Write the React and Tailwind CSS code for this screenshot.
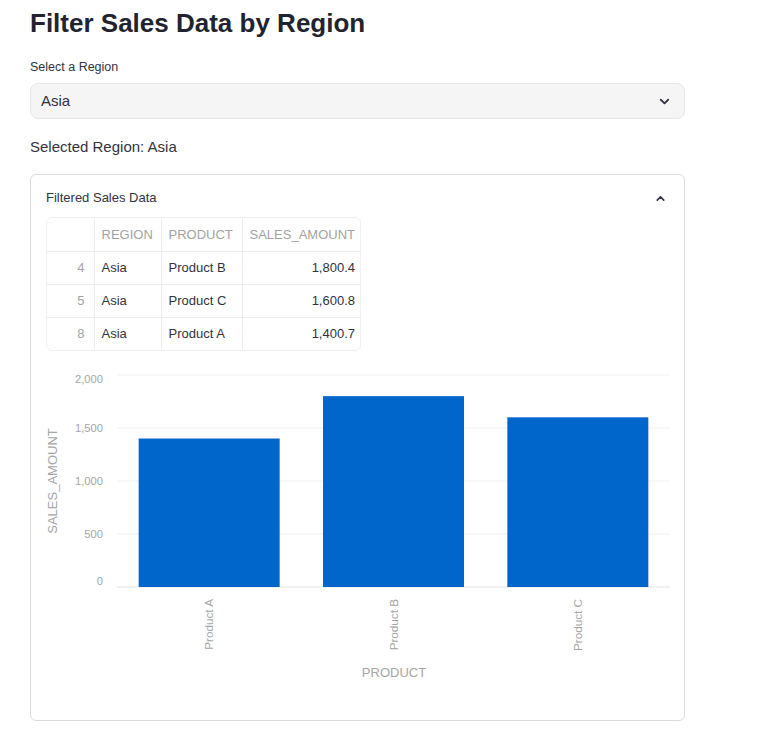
import React, { useState } from 'react';
import { ChevronDown, ChevronUp } from 'lucide-react';

const rows = [
  { idx: 4, region: 'Asia', product: 'Product B', amount: 1800.4 },
  { idx: 5, region: 'Asia', product: 'Product C', amount: 1600.8 },
  { idx: 8, region: 'Asia', product: 'Product A', amount: 1400.7 },
];

const fmt = (n) => n.toLocaleString('en-US', { minimumFractionDigits: 1, maximumFractionDigits: 1 });

const SalesChart = () => {
  // plot area inside the svg
  const left = 71;
  const right = 624;
  const top = 15;
  const bottom = 227;
  const max = 2000;
  const y = (v) => bottom - (v / max) * (bottom - top);
  const band = (right - left) / 3;
  const barW = 141;
  const bars = [...rows].sort((a, b) => a.product.localeCompare(b.product));
  const ticks = [0, 500, 1000, 1500, 2000];
  // end labels are pushed inward so they stay inside the plot
  const labelShift = (t) => (t === max ? 8 : t === 0 ? -2 : 4);

  return (
    <svg width="624" height="330" className="block" style={{ fontFamily: '"Liberation Sans", Arial, sans-serif' }}>
      {ticks.map((t) => (
        <g key={t}>
          <line x1={left} x2={right} y1={y(t)} y2={y(t)} stroke={t === 0 ? '#e4e4e4' : '#f0f0f0'} strokeWidth="1" />
          <text x="57" y={y(t) + labelShift(t)} textAnchor="end" fontSize="11.2" fill="#a5a5a5">
            {t.toLocaleString('en-US')}
          </text>
        </g>
      ))}
      {bars.map((b, i) => {
        const cx = left + band * i + band / 2;
        return (
          <g key={b.product}>
            <rect x={cx - barW / 2} y={y(b.amount)} width={barW} height={bottom - y(b.amount)} fill="#0066cc" />
            <text
              transform={`translate(${cx + 4}, ${bottom + 12}) rotate(-90)`}
              textAnchor="end"
              fontSize="11.7"
              fill="#a5a5a5"
            >
              {b.product}
            </text>
          </g>
        );
      })}
      <text transform="translate(11, 121) rotate(-90)" textAnchor="middle" fontSize="13" fill="#a5a5a5">
        SALES_AMOUNT
      </text>
      <text x="348" y="317" textAnchor="middle" fontSize="13" fill="#a5a5a5">
        PRODUCT
      </text>
    </svg>
  );
};

const App = () => {
  const [region, setRegion] = useState('Asia');
  const [open, setOpen] = useState(true);

  return (
    <div className="min-h-screen bg-white pt-2 pl-[30px] text-[#262730]" style={{ fontFamily: '"Liberation Sans", Arial, sans-serif' }}>
      <div className="w-[655px]">
        <h1 className="text-[26px] leading-[31px] font-bold text-[#1f2430]">Filter Sales Data by Region</h1>

        <label className="block mt-[20px] text-[12.5px] leading-4 text-[#31333f]">Select a Region</label>
        <div className="relative mt-2">
          <select
            value={region}
            onChange={(e) => setRegion(e.target.value)}
            className="appearance-none w-full h-[36px] rounded-lg border border-[#e6e6e6] bg-[#f5f5f5] pl-[10px] text-[15px] text-[#31333f] outline-none"
          >
            <option>Asia</option>
            <option>Europe</option>
            <option>North America</option>
          </select>
          <ChevronDown size={15} strokeWidth={3} className="absolute right-[13px] top-[11px] text-[#31333f] pointer-events-none" />
        </div>

        <p className="mt-[18px] text-[15px] leading-5 text-[#31333f]">Selected Region: {region}</p>

        <div className="mt-[17px] border border-[#dcdcdc] rounded-md px-[15px] pt-[15px] pb-[29px] h-[547px]">
          <button onClick={() => setOpen(!open)} className="w-full flex items-center justify-between text-[13px] leading-4 text-[#31333f]">
            <span>Filtered Sales Data</span>
            <ChevronUp size={13} strokeWidth={3} className="mr-[2px] text-[#31333f]" />
          </button>

          {open && (
            <>
              <div className="mt-[11px] w-[315px] border border-[#f0f0f0] rounded-md overflow-hidden">
                <table className="border-collapse text-[13px] table-fixed w-[315px]">
                  <colgroup>
                    <col className="w-[47px]" />
                    <col className="w-[67px]" />
                    <col className="w-[81px]" />
                    <col className="w-[120px]" />
                  </colgroup>
                  <thead>
                    <tr className="h-[33px] text-[#a3a3a3]">
                      <th className="border-r border-[#ececec]"></th>
                      <th className="font-normal text-left pl-[7px] border-r border-[#ececec]">REGION</th>
                      <th className="font-normal text-left pl-[7px] border-r border-[#ececec]">PRODUCT</th>
                      <th className="font-normal text-left pl-[7px]">SALES_AMOUNT</th>
                    </tr>
                  </thead>
                  <tbody>
                    {rows.map((r) => (
                      <tr key={r.idx} className="h-[33px] border-t border-[#ececec] text-[#31333f]">
                        <td className="text-right pr-[9px] text-[#a3a3a3] border-r border-[#ececec]">{r.idx}</td>
                        <td className="pl-[7px] border-r border-[#ececec]">{r.region}</td>
                        <td className="pl-[7px] border-r border-[#ececec]">{r.product}</td>
                        <td className="text-right pr-[7px]">{fmt(r.amount)}</td>
                      </tr>
                    ))}
                  </tbody>
                </table>
              </div>

              <div className="mt-[9px]">
                <SalesChart />
              </div>
            </>
          )}
        </div>
      </div>
    </div>
  );
};

export default App;
